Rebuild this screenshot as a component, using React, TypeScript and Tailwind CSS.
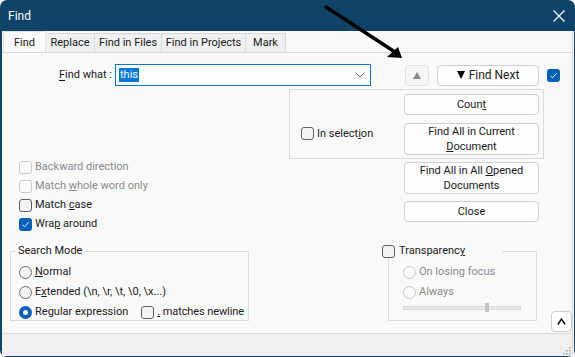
import type { ReactNode } from "react";

const FONT = "font-['Roboto','Noto_Sans',sans-serif]";

function CheckBox({
  checked = false,
  disabled = false,
}: {
  checked?: boolean;
  disabled?: boolean;
}) {
  if (checked) {
    return (
      <span className="flex h-[13px] w-[13px] shrink-0 items-center justify-center rounded-[3px] bg-[#005fb8]">
        <svg width="9" height="9" viewBox="0 0 9 9">
          <path d="M1.5 4.8 L3.6 6.8 L7.6 2.2" fill="none" stroke="#fff" strokeWidth="0.9" />
        </svg>
      </span>
    );
  }
  return (
    <span
      className={
        disabled
          ? "block h-[13px] w-[13px] shrink-0 rounded-[3px] border border-[#cacaca] bg-[#f9f9f9]"
          : "block h-[13px] w-[13px] shrink-0 rounded-[3px] border border-[#5f5f5f] bg-[#f3f3f3]"
      }
    />
  );
}

function Radio({
  checked = false,
  disabled = false,
}: {
  checked?: boolean;
  disabled?: boolean;
}) {
  if (checked) {
    return (
      <span className="flex h-[13px] w-[13px] shrink-0 items-center justify-center rounded-full bg-[#005fb8]">
        <span className="h-[5px] w-[5px] rounded-full bg-white" />
      </span>
    );
  }
  return (
    <span
      className={
        disabled
          ? "block h-[13px] w-[13px] shrink-0 rounded-full border border-[#c8c8c8] bg-[#f9f9f9]"
          : "block h-[13px] w-[13px] shrink-0 rounded-full border border-[#6b6b6b] bg-[#f3f3f3]"
      }
    />
  );
}

function Btn({ children, tall = false }: { children: ReactNode; tall?: boolean }) {
  return (
    <div
      className={`flex w-[135px] items-center justify-center rounded-[4px] border border-[#d0d0d0] bg-[#fdfdfd] text-center leading-[15px] text-[#1a1a1a] ${
        tall ? "h-[32px]" : "h-[21px]"
      }`}
    >
      <span>{children}</span>
    </div>
  );
}

function Option({
  children,
  disabled = false,
  checked = false,
}: {
  children: ReactNode;
  disabled?: boolean;
  checked?: boolean;
}) {
  return (
    <div className="flex h-[19px] items-center gap-[3px]">
      <CheckBox disabled={disabled} checked={checked} />
      <span className={disabled ? "text-[#8a8a8a]" : "text-[#1a1a1a]"}>{children}</span>
    </div>
  );
}

function RadioRow({
  children,
  disabled = false,
  checked = false,
}: {
  children: ReactNode;
  disabled?: boolean;
  checked?: boolean;
}) {
  return (
    <div className="flex h-[20px] items-center gap-[3px]">
      <Radio disabled={disabled} checked={checked} />
      <span className={disabled ? "text-[#8a8a8a]" : "text-[#1a1a1a]"}>{children}</span>
    </div>
  );
}

const tabs = [
  { label: "Replace", w: "w-[49px]" },
  { label: "Find in Files", w: "w-[67px]" },
  { label: "Find in Projects", w: "w-[84px]" },
  { label: "Mark", w: "w-[40px]" },
];

export default function App() {
  return (
    <div
      className={`relative flex h-[357px] w-[575px] flex-col overflow-hidden rounded-[7px] bg-[#0f4468] text-[11px] ${FONT}`}
    >
      {/* Title bar */}
      <div className="flex h-[31px] shrink-0 items-center justify-between pl-[8px] pr-[10px]">
        <span className="text-[12px] text-white">Find</span>
        <svg width="12" height="12" viewBox="0 0 12 12">
          <path d="M0.5 0.5 L11.5 11.5 M11.5 0.5 L0.5 11.5" stroke="#fff" strokeWidth="1.1" />
        </svg>
      </div>

      {/* Client area */}
      <div className="ml-[2px] mr-[1px] mb-[1px] flex flex-1 flex-col bg-[#f9f9f9]">
        <div className="flex w-[571px] flex-col border-r border-[#d8d8d8]">
          {/* Tabs */}
          <div className="flex h-[21px] items-end pl-[1px]">
            <div className="flex h-[21px] w-[43px] items-start justify-center border-x border-t border-[#e2e2e2] bg-[#fbfbfb] pt-[3px] text-[#1a1a1a]">
              Find
            </div>
            {tabs.map((t) => (
              <div
                key={t.label}
                className={`flex h-[19px] items-center justify-center border-r border-t border-[#dadada] bg-[#f0f0f0] text-[#1a1a1a] ${t.w}`}
              >
                {t.label}
              </div>
            ))}
          </div>

          {/* Tab panel */}
          <div className="flex h-[282px] flex-col border-y border-[#dadada] pt-[11px]">
            {/* Find what row */}
            <div className="flex h-[22px] items-center">
              <span className="w-[110px] text-right text-[#1a1a1a]">
                <u className="underline-offset-2">F</u>ind what :
              </span>
              <div className="ml-[3px] flex h-[22px] w-[256px] items-center justify-between border border-[#0078d4] bg-white pl-[3px] pr-[5px]">
                <span className="bg-[#0078d7] px-px leading-[14px] text-white">this</span>
                <svg width="10" height="6" viewBox="0 0 10 6">
                  <path d="M0.5 0.5 L5 5 L9.5 0.5" fill="none" stroke="#606060" strokeWidth="1" />
                </svg>
              </div>
              <div className="ml-[34px] flex h-[21px] w-[24px] items-center justify-center rounded-[4px] border border-[#e2e2e2] bg-[#f5f5f5]">
                <svg width="8" height="7" viewBox="0 0 8 7">
                  <path d="M4 0 L8 7 L0 7 Z" fill="#8a8a8a" />
                </svg>
              </div>
              <div className="ml-[8px] flex h-[21px] w-[102px] items-center justify-center gap-[4px] rounded-[4px] border border-[#d0d0d0] bg-[#fdfdfd] text-[12px] text-[#1a1a1a]">
                <svg width="8" height="8" viewBox="0 0 8 8">
                  <path d="M0 0 L8 0 L4 8 Z" fill="#000" />
                </svg>
                Find Next
              </div>
              <div className="ml-[8px]">
                <CheckBox checked />
              </div>
            </div>

            {/* Middle section */}
            <div className="mt-[3px] flex h-[145px]">
              <div className="flex w-[287px] flex-col pl-[17px] pt-[69px]">
                <Option disabled>Backward direction</Option>
                <Option disabled>
                  Match <u>w</u>hole word only
                </Option>
                <Option>
                  Match <u>c</u>ase
                </Option>
                <Option checked>
                  Wra<u>p</u> around
                </Option>
              </div>
              <div className="flex w-[255px] flex-col">
                <div className="flex h-[70px] border border-[#dcdcdc]">
                  <div className="flex w-[114px] items-start gap-[3px] pl-[11px] pt-[37px]">
                    <CheckBox />
                    <span className="-mt-[1px] text-[#1a1a1a]">
                      In select<u>i</u>on
                    </span>
                  </div>
                  <div className="flex flex-col gap-[8px] pt-[4px]">
                    <Btn>
                      Coun<u>t</u>
                    </Btn>
                    <Btn tall>
                      Find All in Current
                      <br />
                      <u>D</u>ocument
                    </Btn>
                  </div>
                </div>
                <div className="ml-[115px] mt-[3px] flex flex-col gap-[7px]">
                  <Btn tall>
                    Find All in All <u>O</u>pened
                    <br />
                    Documents
                  </Btn>
                  <Btn>Close</Btn>
                </div>
              </div>
            </div>

            {/* Bottom section */}
            <div className="mt-[9px] flex h-[89px] items-start">
              <fieldset className="ml-[8px] h-[78px] w-[239px] border border-[#dcdcdc] pl-[8px]">
                <legend className="-ml-[3px] px-[2px] leading-[16px] text-[#1a1a1a]">Search Mode</legend>
                <div className="flex flex-col pt-[3px]">
                  <RadioRow>
                    <u>N</u>ormal
                  </RadioRow>
                  <RadioRow>
                    E<u>x</u>tended (\n, \r, \t, \0, \x...)
                  </RadioRow>
                  <div className="flex h-[20px] items-center">
                    <Radio checked />
                    <span className="ml-[3px] text-[#1a1a1a]">
                      Re<u>g</u>ular expression
                    </span>
                    <span className="ml-[13px]">
                      <CheckBox />
                    </span>
                    <span className="ml-[3px] tracking-[-0.1px] text-[#1a1a1a]">
                      <u>.</u> matches newline
                    </span>
                  </div>
                </div>
              </fieldset>

              <fieldset className="ml-[139px] h-[78px] w-[149px] border border-[#dcdcdc] pl-[14px]">
                <legend className="-ml-[21px] flex w-[120px] items-center gap-[4px] bg-[#f9f9f9] leading-[16px]">
                  <CheckBox />
                  <span className="text-[#1a1a1a]">
                    Transparenc<u>y</u>
                  </span>
                </legend>
                <div className="flex flex-col pt-[3px]">
                  <RadioRow disabled>On losing focus</RadioRow>
                  <RadioRow disabled>Always</RadioRow>
                  <div className="relative mt-[1px] flex h-[9px] w-[118px] items-center">
                    <div className="h-[4px] w-full border border-[#dadada] bg-[#e8e8e8]" />
                    <div className="absolute left-[82px] top-0 h-[9px] w-[4px] bg-[#c5c5c5]" />
                  </div>
                </div>
              </fieldset>

              <div className="ml-auto flex h-[21px] w-[21px] items-center justify-center self-end rounded-[4px] border border-[#cccccc] bg-white">
                <svg width="9" height="7" viewBox="0 0 9 7">
                  <path d="M0.8 6.5 L4.5 1 L8.2 6.5" fill="none" stroke="#000" strokeWidth="1.4" />
                </svg>
              </div>
            </div>
          </div>

          {/* Status strip */}
          <div className="flex h-[22px] items-end justify-end bg-[#f0f0f0] pb-[1px] pr-[1px]">
            <svg width="8" height="8" viewBox="0 0 8 8">
              <g fill="#a0a0a0">
                <rect x="6" y="0" width="1.5" height="1.5" />
                <rect x="3" y="3" width="1.5" height="1.5" />
                <rect x="6" y="3" width="1.5" height="1.5" />
                <rect x="0" y="6" width="1.5" height="1.5" />
                <rect x="3" y="6" width="1.5" height="1.5" />
                <rect x="6" y="6" width="1.5" height="1.5" />
              </g>
            </svg>
          </div>
        </div>
      </div>

      {/* Annotation arrow drawn over the dialog */}
      <svg
        className="pointer-events-none absolute left-0 top-0"
        width="575"
        height="357"
        viewBox="0 0 575 357"
      >
        <line x1="326" y1="7" x2="395" y2="52" stroke="#000" strokeWidth="3.5" strokeLinecap="round" />
        <path d="M402 58 L387 57 L398 47 Z" fill="#000" />
      </svg>
    </div>
  );
}
